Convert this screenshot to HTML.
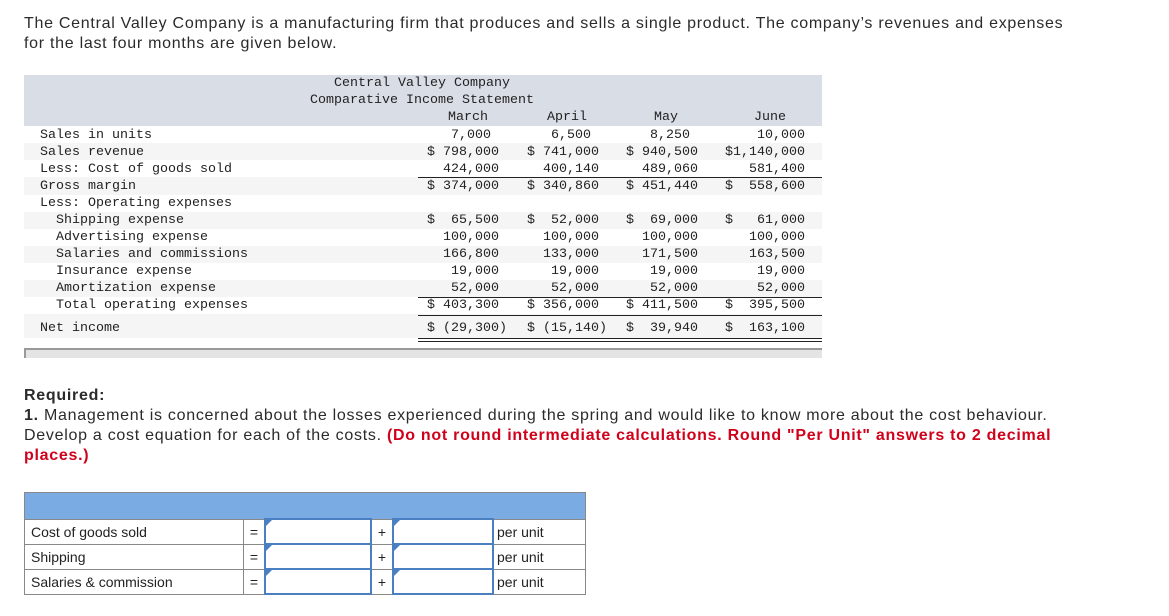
<!DOCTYPE html>
<html><head><meta charset="utf-8"><style>
body{margin:0;width:1169px;height:616px;background:#fff;position:relative;overflow:hidden;font-family:"Liberation Sans",Arial,sans-serif;color:#2b2b2b}
.p{position:absolute;left:24px;font-size:16px;line-height:20px;white-space:nowrap;letter-spacing:0.72px}
.m{position:absolute;font-family:"Liberation Mono",monospace;font-size:13.33px;line-height:17px;white-space:pre;color:#222}
.band{position:absolute;left:24px;width:798px}
.hl{position:absolute;left:418px;width:404px;height:1px;background:#222}
table{position:absolute;left:24px;top:492px;border-collapse:collapse;font-size:14px;color:#222}
td{border:1px solid #888;padding:0;height:23px}
.inp{border:2px solid #4a7fc1;position:relative}
.inp:before{content:"";position:absolute;left:0;top:0;border-left:6px solid #4a7fc1;border-bottom:6px solid transparent;}
</style></head><body>
<div class="p" style="top:14px">The Central Valley Company is a manufacturing firm that produces and sells a single product. The company’s revenues and expenses<br>for the last four months are given below.</div>

<div class="band" style="top:75px;height:51px;background:#d9dde6"></div>
<div class="band" style="top:143px;height:17px;background:#f5f5f5"></div>
<div class="band" style="top:177px;height:18px;background:#f5f5f5"></div>
<div class="band" style="top:212px;height:17px;background:#f5f5f5"></div>
<div class="band" style="top:246px;height:17px;background:#f5f5f5"></div>
<div class="band" style="top:280px;height:17px;background:#f5f5f5"></div>
<div class="band" style="top:314px;height:24px;background:#f5f5f5"></div>
<div class="band" style="top:348px;height:8px;background:#e4e4e4;border-top:2px solid #999;border-left:2px solid #999;width:796px"></div>

<div class="m" style="left:334px;top:75px">Central Valley Company</div>
<div class="m" style="left:310px;top:92px">Comparative Income Statement</div>
<div class="m" style="left:448px;top:109px">March</div>
<div class="m" style="left:547px;top:109px">April</div>
<div class="m" style="left:654px;top:109px">May</div>
<div class="m" style="left:754px;top:109px">June</div>

<div class="m" style="left:40px;top:127px">Sales in units
Sales revenue
Less: Cost of goods sold
Gross margin
Less: Operating expenses
  Shipping expense
  Advertising expense
  Salaries and commissions
  Insurance expense
  Amortization expense
  Total operating expenses</div>
<div class="m" style="left:40px;top:320px">Net income</div>

<div class="m" style="left:427px;top:127px">   7,000
$ 798,000
  424,000
$ 374,000

$  65,500
  100,000
  166,800
   19,000
   52,000
$ 403,300</div>
<div class="m" style="left:527px;top:127px">   6,500
$ 741,000
  400,140
$ 340,860

$  52,000
  100,000
  133,000
   19,000
   52,000
$ 356,000</div>
<div class="m" style="left:626px;top:127px">   8,250
$ 940,500
  489,060
$ 451,440

$  69,000
  100,000
  171,500
   19,000
   52,000
$ 411,500</div>
<div class="m" style="left:725px;top:127px">    10,000
$1,140,000
   581,400
$  558,600

$   61,000
   100,000
   163,500
    19,000
    52,000
$  395,500</div>
<div class="m" style="left:427px;top:320px">$ (29,300)</div>
<div class="m" style="left:527px;top:320px">$ (15,140)</div>
<div class="m" style="left:626px;top:320px">$  39,940</div>
<div class="m" style="left:725px;top:320px">$  163,100</div>

<div class="hl" style="top:177px"></div>
<div class="hl" style="top:297px"></div>
<div class="hl" style="top:315px"></div>
<div class="hl" style="top:338px"></div>
<div class="hl" style="top:341px"></div>

<div class="p" style="top:386px"><b>Required:</b><br><b>1.</b> Management is concerned about the losses experienced during the spring and would like to know more about the cost behaviour.<br>Develop a cost equation for each of the costs. <b style="color:#d0021b">(Do not round intermediate calculations. Round "Per Unit" answers to 2 decimal</b><br><b style="color:#d0021b">places.)</b></div>

<table>
<tr><td colspan="6" style="background:#7aabe3;height:25px"></td></tr>
<tr><td style="width:212px;padding-left:6px">Cost of goods sold</td><td style="width:20px;text-align:center">=</td><td class="inp" style="width:104px"></td><td style="width:20px;text-align:center">+</td><td class="inp" style="width:98px"></td><td style="width:88px;padding-left:3px">per unit</td></tr>
<tr><td style="padding-left:6px">Shipping</td><td style="text-align:center">=</td><td class="inp"></td><td style="text-align:center">+</td><td class="inp"></td><td style="padding-left:3px">per unit</td></tr>
<tr><td style="padding-left:6px">Salaries &amp; commission</td><td style="text-align:center">=</td><td class="inp"></td><td style="text-align:center">+</td><td class="inp"></td><td style="padding-left:3px">per unit</td></tr>
</table>
</body></html>
